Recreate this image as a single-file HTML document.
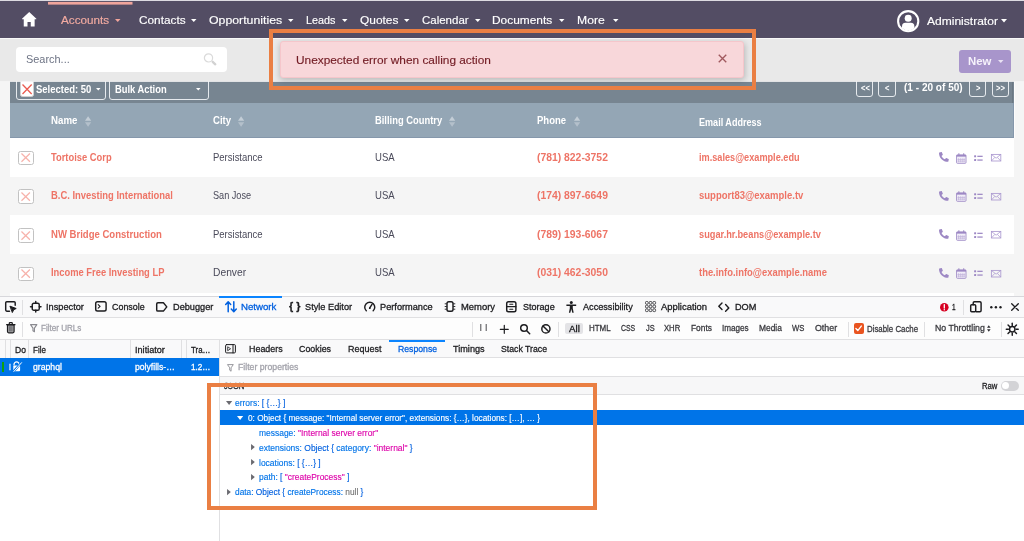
<!DOCTYPE html><html><head><meta charset="utf-8"><title>Accounts</title><style>
html,body{margin:0;padding:0;}body{width:1024px;height:541px;overflow:hidden;position:relative;background:#f5f5f5;font-family:"Liberation Sans", sans-serif;}
.t{position:absolute;white-space:pre;transform-origin:0 50%;}
svg{position:absolute;overflow:visible}
</style></head><body><div id="root" style="position:absolute;left:0;top:0;width:1024px;height:541px;will-change:transform;">
<div style="position:absolute;left:0px;top:0px;width:1024px;height:541px;background:#f5f5f5;"></div>
<div style="position:absolute;left:10px;top:81px;width:1003.5px;height:22px;background:#778591;"></div>
<div style="position:absolute;left:10px;top:102.8px;width:1003.5px;height:34.7px;background:#94a6b5;"></div>
<div style="position:absolute;left:10px;top:136.8px;width:1003.5px;height:1px;background:#8597ab;"></div>
<div style="position:absolute;left:1012.7px;top:102.8px;width:0.9px;height:34.7px;background:#8597ab;"></div>
<div style="position:absolute;left:1012.3px;top:81px;width:1.2px;height:21.8px;background:#6b7883;"></div>
<div style="position:absolute;left:1013.5px;top:81px;width:1.2px;height:57px;background:#fcfcfc;"></div>
<div style="position:absolute;left:10px;top:137.8px;width:1004.3px;height:38.8px;background:#ffffff;"></div>
<div style="position:absolute;left:10px;top:176.6px;width:1004.3px;height:38.8px;background:#f5f5f5;"></div>
<div style="position:absolute;left:10px;top:215.2px;width:1004.3px;height:38.8px;background:#ffffff;"></div>
<div style="position:absolute;left:10px;top:253.8px;width:1004.3px;height:38.8px;background:#f5f5f5;"></div>
<div style="position:absolute;left:10px;top:292.8px;width:1004.3px;height:10px;background:#ffffff;"></div>
<div style="position:absolute;left:15.5px;top:78px;width:90px;height:21.5px;box-sizing:border-box;border:1px solid #e6eaee;border-radius:3px;"></div>
<div style="position:absolute;left:109.3px;top:78px;width:100.2px;height:21.5px;box-sizing:border-box;border:1px solid #e6eaee;border-radius:3px;"></div>
<div style="position:absolute;left:856px;top:76px;width:17px;height:20.5px;box-sizing:border-box;border:1px solid #e6eaee;border-radius:3px;"></div>
<div style="position:absolute;left:878px;top:76px;width:17.5px;height:20.5px;box-sizing:border-box;border:1px solid #e6eaee;border-radius:3px;"></div>
<div style="position:absolute;left:969px;top:76px;width:16.5px;height:20.5px;box-sizing:border-box;border:1px solid #e6eaee;border-radius:3px;"></div>
<div style="position:absolute;left:991.8px;top:76px;width:17.2px;height:20.5px;box-sizing:border-box;border:1px solid #e6eaee;border-radius:3px;"></div>
<div style="position:absolute;left:20px;top:80px;width:13.500px;height:17px;background:#fff;border-radius:2.500px;box-sizing:border-box;border:1px solid #d0d0d0;"></div>
<svg style="left:21.700px;top:83.800px" width="10.200" height="10.600" viewBox="0 0 10 10" preserveAspectRatio="none"><path d="M0.5 0.5L9.5 9.5M9.5 0.5L0.5 9.5" stroke="#ea5b50" stroke-width="1.300" fill="none"/></svg>
<svg style="left:96.3px;top:87.5px" width="4.6" height="2.6" viewBox="0 0 4.6 2.6"><path d="M0 0H4.6L2.3 2.6Z" fill="#fff"/></svg>
<svg style="left:196.3px;top:87.5px" width="4.6" height="2.6" viewBox="0 0 4.6 2.6"><path d="M0 0H4.6L2.3 2.6Z" fill="#fff"/></svg>
<svg style="left:85px;top:115.7px" width="6.200" height="11" viewBox="0 0 6 10.4"><path d="M0 4.4H6L3 0Z" fill="#c3cdd6"/><path d="M0 6H6L3 10.4Z" fill="#b4c0cb"/></svg>
<svg style="left:238px;top:115.7px" width="6.200" height="11" viewBox="0 0 6 10.4"><path d="M0 4.4H6L3 0Z" fill="#c3cdd6"/><path d="M0 6H6L3 10.4Z" fill="#b4c0cb"/></svg>
<svg style="left:449px;top:115.7px" width="6.200" height="11" viewBox="0 0 6 10.4"><path d="M0 4.4H6L3 0Z" fill="#c3cdd6"/><path d="M0 6H6L3 10.4Z" fill="#b4c0cb"/></svg>
<svg style="left:573.8px;top:115.7px" width="6.200" height="11" viewBox="0 0 6 10.4"><path d="M0 4.4H6L3 0Z" fill="#c3cdd6"/><path d="M0 6H6L3 10.4Z" fill="#b4c0cb"/></svg>
<div style="position:absolute;left:18.300px;top:150.5px;width:15.300px;height:14.800px;box-sizing:border-box;border:1px solid #c2c2c2;border-radius:2.5px;background:#fff;"></div>
<svg style="left:21.2px;top:153.20000000000002px" width="9.4" height="9.2" viewBox="0 0 10 10" preserveAspectRatio="none"><path d="M0.500 0.500L9.500 9.500M9.500 0.500L0.500 9.500" stroke="#f7b2ab" stroke-width="1.3" fill="none"/></svg>
<svg style="left:939px;top:152.20000000000002px" width="9.800" height="9.800" viewBox="0 0 512 512"><path fill="#9d88c4" d="M493.4 24.6l-104-24c-11.3-2.6-22.9 3.300-27.500 13.900l-48 112c-4.200 9.800-1.400 21.300 6.900 28l60.600 49.600c-36 76.700-98.900 140.500-177.200 177.200l-49.600-60.600c-6.800-8.300-18.200-11.100-28-6.900l-112 48C3.900 366.500-2 378.100.6 389.400l24 104C27.100 504.200 36.700 512 48 512c256.100 0 464-207.500 464-464 0-11.200-7.700-20.900-18.600-23.400z" transform="translate(512 0) scale(-1 1)"/></svg>
<svg style="left:955.800px;top:152.50000000000003px" width="10.600" height="10.800" viewBox="0 0 11.2 11.6"><rect x="0.5" y="2" width="10.2" height="9.1" rx="1" fill="#f1edf8" stroke="#9d88c4" stroke-width="0.900"/><rect x="0.5" y="2" width="10.2" height="1.900" fill="#9d88c4"/><path d="M3 0.3V2.6M8.2 0.3V2.6" stroke="#9d88c4" stroke-width="1.1"/><path d="M2.6 5.6V10M4.6 5.6V10M6.600 5.6V10M8.6 5.6V10M1.5 7H9.7M1.5 8.800H9.7" stroke="#9d88c4" stroke-width="0.7" opacity="0.600"/></svg>
<svg style="left:973.500px;top:154.50000000000003px" width="8.800" height="6.400" viewBox="0 0 9.6 7.2"><rect x="0" y="0.400" width="2.2" height="2.2" rx="0.4" fill="#9d88c4"/><rect x="0" y="4.600" width="2.2" height="2.2" rx="0.4" fill="#9d88c4"/><rect x="3.6" y="0.800" width="6" height="1.4" fill="#9d88c4"/><rect x="3.6" y="5" width="6" height="1.4" fill="#9d88c4"/></svg>
<svg style="left:991.200px;top:154.3px" width="10.200" height="7.400" viewBox="0 0 10.8 7.8"><rect x="0.4" y="0.400" width="10" height="7" fill="none" stroke="#ab99d0" stroke-width="0.900"/><path d="M0.600 0.600L5.4 4.400L10.200 0.600M0.600 7.200L4.100 3.500M10.200 7.200L6.700 3.500" stroke="#ab99d0" stroke-width="0.800" fill="none"/></svg>
<div style="position:absolute;left:18.300px;top:189.22px;width:15.300px;height:14.800px;box-sizing:border-box;border:1px solid #c2c2c2;border-radius:2.5px;background:#fff;"></div>
<svg style="left:21.2px;top:191.92000000000002px" width="9.4" height="9.2" viewBox="0 0 10 10" preserveAspectRatio="none"><path d="M0.500 0.500L9.500 9.500M9.500 0.500L0.500 9.500" stroke="#f7b2ab" stroke-width="1.3" fill="none"/></svg>
<svg style="left:939px;top:190.70000000000002px" width="9.800" height="9.800" viewBox="0 0 512 512"><path fill="#9d88c4" d="M493.4 24.6l-104-24c-11.3-2.6-22.9 3.300-27.500 13.900l-48 112c-4.200 9.800-1.400 21.300 6.900 28l60.600 49.600c-36 76.700-98.900 140.500-177.200 177.200l-49.600-60.600c-6.800-8.300-18.200-11.100-28-6.900l-112 48C3.900 366.500-2 378.100.6 389.400l24 104C27.100 504.200 36.700 512 48 512c256.100 0 464-207.500 464-464 0-11.200-7.700-20.900-18.600-23.400z" transform="translate(512 0) scale(-1 1)"/></svg>
<svg style="left:955.800px;top:191.00000000000003px" width="10.600" height="10.800" viewBox="0 0 11.2 11.6"><rect x="0.5" y="2" width="10.2" height="9.1" rx="1" fill="#f1edf8" stroke="#9d88c4" stroke-width="0.900"/><rect x="0.5" y="2" width="10.2" height="1.900" fill="#9d88c4"/><path d="M3 0.3V2.6M8.2 0.3V2.6" stroke="#9d88c4" stroke-width="1.1"/><path d="M2.6 5.6V10M4.6 5.6V10M6.600 5.6V10M8.6 5.6V10M1.5 7H9.7M1.5 8.800H9.7" stroke="#9d88c4" stroke-width="0.7" opacity="0.600"/></svg>
<svg style="left:973.500px;top:193.00000000000003px" width="8.800" height="6.400" viewBox="0 0 9.6 7.2"><rect x="0" y="0.400" width="2.2" height="2.2" rx="0.4" fill="#9d88c4"/><rect x="0" y="4.600" width="2.2" height="2.2" rx="0.4" fill="#9d88c4"/><rect x="3.6" y="0.800" width="6" height="1.4" fill="#9d88c4"/><rect x="3.6" y="5" width="6" height="1.4" fill="#9d88c4"/></svg>
<svg style="left:991.200px;top:192.8px" width="10.200" height="7.400" viewBox="0 0 10.8 7.8"><rect x="0.4" y="0.400" width="10" height="7" fill="none" stroke="#ab99d0" stroke-width="0.900"/><path d="M0.600 0.600L5.4 4.400L10.200 0.600M0.600 7.200L4.100 3.500M10.200 7.200L6.700 3.500" stroke="#ab99d0" stroke-width="0.800" fill="none"/></svg>
<div style="position:absolute;left:18.300px;top:227.94px;width:15.300px;height:14.800px;box-sizing:border-box;border:1px solid #c2c2c2;border-radius:2.5px;background:#fff;"></div>
<svg style="left:21.2px;top:230.64000000000001px" width="9.4" height="9.2" viewBox="0 0 10 10" preserveAspectRatio="none"><path d="M0.500 0.500L9.500 9.500M9.500 0.500L0.500 9.500" stroke="#f7b2ab" stroke-width="1.3" fill="none"/></svg>
<svg style="left:939px;top:229.20000000000002px" width="9.800" height="9.800" viewBox="0 0 512 512"><path fill="#9d88c4" d="M493.4 24.6l-104-24c-11.3-2.6-22.9 3.300-27.500 13.900l-48 112c-4.200 9.800-1.400 21.300 6.900 28l60.600 49.600c-36 76.700-98.900 140.500-177.200 177.200l-49.600-60.600c-6.800-8.300-18.200-11.100-28-6.900l-112 48C3.900 366.500-2 378.100.6 389.400l24 104C27.100 504.200 36.700 512 48 512c256.100 0 464-207.500 464-464 0-11.200-7.700-20.900-18.600-23.400z" transform="translate(512 0) scale(-1 1)"/></svg>
<svg style="left:955.800px;top:229.50000000000003px" width="10.600" height="10.800" viewBox="0 0 11.2 11.6"><rect x="0.5" y="2" width="10.2" height="9.1" rx="1" fill="#f1edf8" stroke="#9d88c4" stroke-width="0.900"/><rect x="0.5" y="2" width="10.2" height="1.900" fill="#9d88c4"/><path d="M3 0.3V2.6M8.2 0.3V2.6" stroke="#9d88c4" stroke-width="1.1"/><path d="M2.6 5.6V10M4.6 5.6V10M6.600 5.6V10M8.6 5.6V10M1.5 7H9.7M1.5 8.800H9.7" stroke="#9d88c4" stroke-width="0.7" opacity="0.600"/></svg>
<svg style="left:973.500px;top:231.50000000000003px" width="8.800" height="6.400" viewBox="0 0 9.6 7.2"><rect x="0" y="0.400" width="2.2" height="2.2" rx="0.4" fill="#9d88c4"/><rect x="0" y="4.600" width="2.2" height="2.2" rx="0.4" fill="#9d88c4"/><rect x="3.6" y="0.800" width="6" height="1.4" fill="#9d88c4"/><rect x="3.6" y="5" width="6" height="1.4" fill="#9d88c4"/></svg>
<svg style="left:991.200px;top:231.3px" width="10.200" height="7.400" viewBox="0 0 10.8 7.8"><rect x="0.4" y="0.400" width="10" height="7" fill="none" stroke="#ab99d0" stroke-width="0.900"/><path d="M0.600 0.600L5.4 4.400L10.200 0.600M0.600 7.200L4.100 3.500M10.200 7.200L6.700 3.500" stroke="#ab99d0" stroke-width="0.800" fill="none"/></svg>
<div style="position:absolute;left:18.300px;top:266.66px;width:15.300px;height:14.800px;box-sizing:border-box;border:1px solid #c2c2c2;border-radius:2.5px;background:#fff;"></div>
<svg style="left:21.2px;top:269.36px" width="9.4" height="9.2" viewBox="0 0 10 10" preserveAspectRatio="none"><path d="M0.500 0.500L9.500 9.500M9.500 0.500L0.500 9.500" stroke="#f7b2ab" stroke-width="1.3" fill="none"/></svg>
<svg style="left:939px;top:267.7px" width="9.800" height="9.800" viewBox="0 0 512 512"><path fill="#9d88c4" d="M493.4 24.6l-104-24c-11.3-2.6-22.9 3.300-27.500 13.900l-48 112c-4.200 9.800-1.400 21.300 6.900 28l60.600 49.600c-36 76.700-98.900 140.500-177.200 177.200l-49.600-60.600c-6.800-8.300-18.200-11.100-28-6.900l-112 48C3.900 366.500-2 378.100.6 389.400l24 104C27.100 504.200 36.700 512 48 512c256.100 0 464-207.500 464-464 0-11.200-7.700-20.900-18.600-23.400z" transform="translate(512 0) scale(-1 1)"/></svg>
<svg style="left:955.800px;top:268.0px" width="10.600" height="10.800" viewBox="0 0 11.2 11.6"><rect x="0.5" y="2" width="10.2" height="9.1" rx="1" fill="#f1edf8" stroke="#9d88c4" stroke-width="0.900"/><rect x="0.5" y="2" width="10.2" height="1.900" fill="#9d88c4"/><path d="M3 0.3V2.6M8.2 0.3V2.6" stroke="#9d88c4" stroke-width="1.1"/><path d="M2.6 5.6V10M4.6 5.6V10M6.600 5.6V10M8.6 5.6V10M1.5 7H9.7M1.5 8.800H9.7" stroke="#9d88c4" stroke-width="0.7" opacity="0.600"/></svg>
<svg style="left:973.500px;top:270.0px" width="8.800" height="6.400" viewBox="0 0 9.6 7.2"><rect x="0" y="0.400" width="2.2" height="2.2" rx="0.4" fill="#9d88c4"/><rect x="0" y="4.600" width="2.2" height="2.2" rx="0.4" fill="#9d88c4"/><rect x="3.6" y="0.800" width="6" height="1.4" fill="#9d88c4"/><rect x="3.6" y="5" width="6" height="1.4" fill="#9d88c4"/></svg>
<svg style="left:991.200px;top:269.8px" width="10.200" height="7.400" viewBox="0 0 10.8 7.8"><rect x="0.4" y="0.400" width="10" height="7" fill="none" stroke="#ab99d0" stroke-width="0.900"/><path d="M0.600 0.600L5.4 4.400L10.200 0.600M0.600 7.200L4.100 3.500M10.200 7.200L6.700 3.500" stroke="#ab99d0" stroke-width="0.800" fill="none"/></svg>
<div style="position:absolute;left:0px;top:38px;width:1024px;height:43px;background:#e9e9e9;"></div>
<div style="position:absolute;left:0px;top:81px;width:1024px;height:1px;background:#f3f3f3;opacity:.85;"></div>
<div style="position:absolute;left:0px;top:38px;width:1024px;height:1px;background:#f8f8f8;"></div>
<div style="position:absolute;left:16.200px;top:46.600px;width:210.8px;height:25px;background:#fff;border-radius:4px;"></div>
<svg style="left:203px;top:53px" width="14" height="13" viewBox="0 0 14 13"><circle cx="5.500" cy="4.900" r="4.100" fill="none" stroke="#dadada" stroke-width="1.200"/><path d="M9.700 8.800L12.300 11.300" stroke="#d2d2d2" stroke-width="2.300" stroke-linecap="round"/></svg>
<div style="position:absolute;left:958.5px;top:50px;width:52.5px;height:22.8px;background:#a895cb;border-radius:3px;"></div>
<svg style="left:997.5px;top:59.5px" width="5.5" height="3" viewBox="0 0 5.5 3"><path d="M0 0H5.5L2.75 3Z" fill="#e9e2f3"/></svg>
<div style="position:absolute;left:0px;top:0px;width:1024px;height:38px;background:#534d64;"></div>
<div style="position:absolute;left:0px;top:0px;width:1024px;height:1px;background:#dddbe1;"></div>
<svg style="left:48px;top:0px" width="84.500" height="6" viewBox="0 0 84.500 6"><rect x="0" y="1.900" width="84.500" height="2.700" fill="#f0a59c"/></svg>
<svg style="left:22.200px;top:11.900px" width="14.400" height="14.600" viewBox="0 0 14.400 14.600"><path d="M7.200 0L0 6.800Q0 7.300 0.500 7.300H1.750V14.600H5.500V10H8.750V14.600H12.650V7.300H13.900Q14.400 7.300 14.400 6.800Z" fill="#fff"/></svg>
<svg style="left:115px;top:19.3px" width="5.5" height="3" viewBox="0 0 5.5 3"><path d="M0 0H5.5L2.75 3Z" fill="#f3a59b"/></svg>
<svg style="left:191.2px;top:19.3px" width="5.5" height="3" viewBox="0 0 5.5 3"><path d="M0 0H5.5L2.75 3Z" fill="#fff"/></svg>
<svg style="left:288px;top:19.3px" width="5.5" height="3" viewBox="0 0 5.5 3"><path d="M0 0H5.5L2.75 3Z" fill="#fff"/></svg>
<svg style="left:341.5px;top:19.3px" width="5.5" height="3" viewBox="0 0 5.5 3"><path d="M0 0H5.5L2.75 3Z" fill="#fff"/></svg>
<svg style="left:404px;top:19.3px" width="5.5" height="3" viewBox="0 0 5.5 3"><path d="M0 0H5.5L2.75 3Z" fill="#fff"/></svg>
<svg style="left:474.8px;top:19.3px" width="5.5" height="3" viewBox="0 0 5.5 3"><path d="M0 0H5.5L2.75 3Z" fill="#fff"/></svg>
<svg style="left:558.8px;top:19.3px" width="5.5" height="3" viewBox="0 0 5.5 3"><path d="M0 0H5.5L2.75 3Z" fill="#fff"/></svg>
<svg style="left:613.2px;top:19.3px" width="5.5" height="3" viewBox="0 0 5.5 3"><path d="M0 0H5.5L2.75 3Z" fill="#fff"/></svg>
<svg style="left:896.8px;top:9.700px" width="22.4" height="22.4" viewBox="0 0 22.400 22.400"><defs><clipPath id="uc"><circle cx="11.200" cy="11.200" r="9.2"/></clipPath></defs><circle cx="11.200" cy="11.200" r="10.1" fill="none" stroke="#fff" stroke-width="2.100"/><g clip-path="url(#uc)" fill="#fff"><circle cx="11.200" cy="8.300" r="3.5"/><path d="M5 22V16.500Q5 12.800 8.500 12.800H13.900Q17.400 12.800 17.400 16.500V22Z"/></g></svg>
<svg style="left:1001px;top:19.4px" width="6" height="3.4" viewBox="0 0 6 3.4"><path d="M0 0H6L3.0 3.4Z" fill="#fff"/></svg>
<div style="position:absolute;left:280px;top:40.700px;width:464px;height:37.200px;box-sizing:border-box;background:#f8d7da;border:1px solid #f5c6cb;border-radius:3px;box-shadow:0.500px 2px 6px rgba(0,0,0,.22);"></div>
<svg style="left:718.3px;top:54px" width="9" height="9" viewBox="0 0 8.500 8.500"><path d="M0.700 0.700L7.800 7.800M7.800 0.700L0.700 7.800" stroke="#a0595e" stroke-width="1.300"/></svg>
<div style="position:absolute;left:269px;top:28.500px;width:487px;height:61.500px;box-sizing:border-box;border:4px solid #ea7f43;z-index:5"></div>
<div style="position:absolute;left:0px;top:296px;width:1024px;height:245px;background:#ffffff;"></div>
<div style="position:absolute;left:0px;top:295.5px;width:1024px;height:1px;background:#d7d7db;"></div>
<div style="position:absolute;left:0px;top:296.5px;width:1024px;height:20.5px;background:#f9f9fa;"></div>
<div style="position:absolute;left:0px;top:317px;width:1024px;height:1px;background:#e0e0e2;"></div>
<div style="position:absolute;left:218.8px;top:296px;width:63.2px;height:1.5px;background:#0a84ff;"></div>
<div style="position:absolute;left:0px;top:318px;width:1024px;height:21px;background:#fdfdfd;"></div>
<div style="position:absolute;left:0px;top:339px;width:1024px;height:1px;background:#e0e0e2;"></div>
<div style="position:absolute;left:0px;top:340px;width:219px;height:17.5px;background:#f9f9fa;"></div>
<div style="position:absolute;left:0px;top:357.5px;width:219px;height:0.8px;background:#e0e0e2;"></div>
<div style="position:absolute;left:5px;top:340px;width:0.8px;height:17.5px;background:#e0e0e2;"></div>
<div style="position:absolute;left:10.4px;top:340px;width:0.8px;height:17.5px;background:#e0e0e2;"></div>
<div style="position:absolute;left:28px;top:340px;width:0.8px;height:17.5px;background:#e0e0e2;"></div>
<div style="position:absolute;left:130px;top:340px;width:0.8px;height:17.5px;background:#e0e0e2;"></div>
<div style="position:absolute;left:181.2px;top:340px;width:0.8px;height:17.5px;background:#e0e0e2;"></div>
<div style="position:absolute;left:186px;top:340px;width:0.8px;height:17.5px;background:#e0e0e2;"></div>
<div style="position:absolute;left:0px;top:358px;width:219px;height:17.8px;background:#0074e8;"></div>
<div style="position:absolute;left:2px;top:362.2px;width:2px;height:9.6px;background:#10a010;"></div>
<div style="position:absolute;left:219px;top:340px;width:1px;height:201px;background:#e0e0e2;"></div>
<div style="position:absolute;left:220px;top:340px;width:804px;height:17px;background:#f9f9fa;"></div>
<div style="position:absolute;left:220px;top:357px;width:804px;height:0.8px;background:#e0e0e2;"></div>
<div style="position:absolute;left:388.8px;top:340px;width:56.4px;height:1.5px;background:#0a84ff;"></div>
<div style="position:absolute;left:220px;top:357.8px;width:804px;height:18.2px;background:#ffffff;"></div>
<div style="position:absolute;left:220px;top:376px;width:804px;height:0.8px;background:#e0e0e2;"></div>
<div style="position:absolute;left:220px;top:376.8px;width:804px;height:17.5px;background:#f7f7f8;"></div>
<div style="position:absolute;left:220px;top:394.3px;width:804px;height:0.8px;background:#e0e0e2;"></div>
<div style="position:absolute;left:220px;top:410.2px;width:804px;height:14.5px;background:#0074e8;"></div>
<svg style="left:5px;top:301px" width="11.5" height="11.5" viewBox="0 0 11.5 11.5" fill="none" stroke="#1c1c1f" stroke-width="1.450" stroke-linecap="round" stroke-linejoin="round"><path d="M4.500 10.200H1.800Q0.700 10.200 0.700 9.100V1.800Q0.700 0.700 1.800 0.700H9.100Q10.200 0.700 10.200 1.800V4.200"/><path d="M5.300 5.300L11.200 7.500L8.700 8.700L7.500 11.200Z" fill="#1c1c1f" stroke-width="1"/></svg>
<div style="position:absolute;left:22px;top:299.5px;width:1px;height:15.5px;background:#e0e0e2;"></div>
<svg style="left:29.5px;top:301px" width="11.5" height="11.5" viewBox="0 0 11.5 11.5" fill="none" stroke="#1c1c1f" stroke-width="1.450" stroke-linecap="round" stroke-linejoin="round"><rect x="2.250" y="2.250" width="7" height="7" rx="1.600"/><path d="M5.750 0.500V2.200M5.750 9.300V11M0.500 5.750H2.200M9.300 5.750H11"/></svg>
<svg style="left:95.3px;top:301.3px" width="11.8" height="10.8" viewBox="0 0 11.8 10.8" fill="none" stroke="#1c1c1f" stroke-width="1.450" stroke-linecap="round" stroke-linejoin="round"><rect x="0.700" y="0.700" width="10.400" height="9.400" rx="1.800"/><path d="M3.200 3.600L5.100 5.400L3.200 7.200" stroke-width="1.100"/></svg>
<svg style="left:156px;top:301.8px" width="11.5" height="9.8" viewBox="0 0 11.5 9.8" fill="none" stroke="#1c1c1f" stroke-width="1.450" stroke-linecap="round" stroke-linejoin="round"><path d="M1.900 0.700H7.400L10.800 4.900L7.400 9.100H1.900Q0.700 9.100 0.700 7.900V1.900Q0.700 0.700 1.900 0.700Z"/></svg>
<svg style="left:224.5px;top:300.5px" width="12" height="11.5" viewBox="0 0 12 11.5" fill="none" stroke="#0060df" stroke-width="1.500" stroke-linecap="round" stroke-linejoin="round"><path d="M3.200 10.800V1M0.700 3.500L3.200 0.800L5.700 3.500M8.800 0.700V10.500M6.300 8L8.800 10.700L11.300 8"/></svg>
<svg style="left:363.8px;top:300.8px" width="11.5" height="11" viewBox="0 0 11.5 11" fill="none" stroke="#1c1c1f" stroke-width="1.450" stroke-linecap="round" stroke-linejoin="round"><path d="M2.300 9.800A5 5 0 1 1 9.200 9.800"/><path d="M5.750 6.800L8 3.400"/><circle cx="5.750" cy="7.200" r="0.900" fill="#1c1c1f" stroke="none"/></svg>
<svg style="left:443.8px;top:301px" width="12" height="11" viewBox="0 0 12 11" fill="none" stroke="#1c1c1f" stroke-width="1.450" stroke-linecap="round" stroke-linejoin="round"><rect x="3" y="0.700" width="6" height="9.600" rx="1.800"/><path d="M1.100 2.800H2.400M1.100 5.500H2.400M1.100 8.200H2.400M9.600 2.800H10.900M9.600 5.500H10.900M9.600 8.200H10.900" stroke-width="0.900"/></svg>
<svg style="left:506.2px;top:300.8px" width="10.6" height="11.4" viewBox="0 0 10.6 11.4" fill="none" stroke="#1c1c1f" stroke-width="1.450" stroke-linecap="round" stroke-linejoin="round"><rect x="0.700" y="0.700" width="9.200" height="10" rx="1.800"/><path d="M0.700 5.700H9.900" stroke-width="1.200"/><path d="M3.800 3.300H6.800M3.800 8.300H6.800" stroke-width="1.100"/></svg>
<svg style="left:566.2px;top:300.500px" width="10.600" height="12" viewBox="0 0 10.600 12" fill="#1c1c1f"><circle cx="5.300" cy="1.500" r="1.500"/><path d="M0.400 3.600H10.200V5H6.800V7.200L7.700 11.800H6.300L5.300 8L4.300 11.800H2.900L3.800 7.200V5H0.400Z"/></svg>
<svg style="left:644.5px;top:301px" width="11" height="11" viewBox="0 0 11 11" fill="none" stroke="#2a2a2e" stroke-width="0.800"><rect x="0.5" y="0.5" width="2.700" height="2.700" rx="0.900"/><rect x="0.5" y="4.2" width="2.700" height="2.700" rx="0.900"/><rect x="0.5" y="7.9" width="2.700" height="2.700" rx="0.900"/><rect x="4.2" y="0.5" width="2.700" height="2.700" rx="0.900"/><rect x="4.2" y="4.2" width="2.700" height="2.700" rx="0.900"/><rect x="4.2" y="7.9" width="2.700" height="2.700" rx="0.900"/><rect x="7.9" y="0.5" width="2.700" height="2.700" rx="0.900"/><rect x="7.9" y="4.2" width="2.700" height="2.700" rx="0.900"/><rect x="7.9" y="7.9" width="2.700" height="2.700" rx="0.900"/></svg>
<svg style="left:718.2px;top:301.5px" width="11.8" height="10" viewBox="0 0 11.8 10" fill="none" stroke="#1c1c1f" stroke-width="1.450" stroke-linecap="round" stroke-linejoin="round"><path d="M4 1L0.800 4.300L4 7.600M7.600 2.600L10.800 5.900L7.600 9.200" stroke-width="1.400"/></svg>
<svg style="left:940px;top:303.100px" width="8.600" height="8.600" viewBox="0 0 8.600 8.600"><circle cx="4.300" cy="4.300" r="4.300" fill="#d70022"/><path d="M4.300 1.700V5" stroke="#fff" stroke-width="1.300" stroke-linecap="round"/><circle cx="4.300" cy="6.700" r="0.750" fill="#fff"/></svg>
<div style="position:absolute;left:962.5px;top:299.5px;width:0.8px;height:15.5px;background:#e0e0e2;"></div>
<svg style="left:970px;top:301.4px" width="11.8" height="11.4" viewBox="0 0 11.8 11.4" fill="none" stroke="#1c1c1f" stroke-width="1.450" stroke-linecap="round" stroke-linejoin="round"><path d="M3.200 3.800V1.900Q3.200 0.700 4.400 0.700H9.900Q11.100 0.700 11.100 1.900V9.500Q11.100 10.700 9.900 10.700H6.200"/><rect x="0.700" y="3.800" width="5" height="6.900" rx="1"/></svg>
<svg style="left:990px;top:306.100px" width="11.800" height="2.600" viewBox="0 0 11.800 2.600" fill="#1c1c1f"><circle cx="1.300" cy="1.300" r="1.200"/><circle cx="5.900" cy="1.300" r="1.200"/><circle cx="10.500" cy="1.300" r="1.200"/></svg>
<svg style="left:1011.2px;top:302.6px" width="8" height="8" viewBox="0 0 8 8" fill="none" stroke="#1c1c1f" stroke-width="1.450" stroke-linecap="round" stroke-linejoin="round"><path d="M0.700 0.700L7.300 7.300M7.300 0.700L0.700 7.300" stroke-width="1.300"/></svg>
<svg style="left:6.2px;top:322.2px" width="9.6" height="11.4" viewBox="0 0 9.6 11.4" fill="none" stroke="#1c1c1f" stroke-width="1.450" stroke-linecap="round" stroke-linejoin="round"><path d="M0.600 2.700H9M3.300 2.500V1.300Q3.300 0.600 4 0.600H5.600Q6.300 0.600 6.300 1.300V2.500" stroke-width="1.200"/><path d="M1.500 2.900V9.600Q1.500 10.800 2.700 10.800H6.900Q8.100 10.800 8.100 9.600V2.900Z" fill="#3a3a3e" fill-opacity="0.45" stroke-width="1.200"/><path d="M3.600 4.600V9M4.800 4.600V9M6 4.600V9" stroke-width="0.600" stroke="#4a4a4f"/></svg>
<div style="position:absolute;left:22px;top:321.5px;width:1px;height:15.5px;background:#e0e0e2;"></div>
<svg style="left:30.400px;top:324.400px" width="7.400" height="8.600" viewBox="0 0 7 8" fill="none" stroke="#8a8a90" stroke-width="1.050" stroke-linejoin="round"><path d="M0.500 0.500H6.500L4.200 3.800V7.300L2.800 6.300V3.800Z"/></svg>
<div style="position:absolute;left:472px;top:321.5px;width:0.8px;height:15.5px;background:#e0e0e2;"></div>
<svg style="left:479.700px;top:323.700px" width="7" height="7" viewBox="0 0 7 7" stroke="#4a4a4f" stroke-width="1"><path d="M0.800 0V7M6.200 0V7"/></svg>
<svg style="left:499.5px;top:324.8px" width="8.6" height="8.6" viewBox="0 0 8.6 8.6" fill="none" stroke="#1c1c1f" stroke-width="1.450" stroke-linecap="round" stroke-linejoin="round"><path d="M4.300 0.300V8.300M0.300 4.300H8.300" stroke-width="1.200"/></svg>
<svg style="left:519.5px;top:324px" width="10.4" height="10.4" viewBox="0 0 10.4 10.4" fill="none" stroke="#1c1c1f" stroke-width="1.450" stroke-linecap="round" stroke-linejoin="round"><circle cx="4" cy="4" r="3.300"/><path d="M6.500 6.500L9.700 9.700" stroke-width="1.500"/></svg>
<svg style="left:540.8px;top:324.2px" width="9.8" height="9.8" viewBox="0 0 9.8 9.8" fill="none" stroke="#1c1c1f" stroke-width="1.450" stroke-linecap="round" stroke-linejoin="round"><circle cx="4.900" cy="4.900" r="4.100"/><path d="M2 2L7.800 7.800"/></svg>
<div style="position:absolute;left:557.5px;top:321.5px;width:0.8px;height:15.5px;background:#e0e0e2;"></div>
<div style="position:absolute;left:565px;top:323px;width:18px;height:11px;background:#e3e3e6;border-radius:2px;"></div>
<div style="position:absolute;left:848px;top:321.5px;width:0.8px;height:15.5px;background:#e0e0e2;"></div>
<div style="position:absolute;left:853.800px;top:323px;width:10px;height:10.800px;background:#e95420;border-radius:2px;"></div>
<svg style="left:855.300px;top:324.800px" width="7.200" height="7" viewBox="0 0 7.200 7" fill="none" stroke="#fff" stroke-width="1.400" stroke-linecap="round" stroke-linejoin="round"><path d="M0.900 3.600L2.800 5.600L6.300 1.100"/></svg>
<div style="position:absolute;left:924.2px;top:321.5px;width:0.8px;height:15.5px;background:#e0e0e2;"></div>
<svg style="left:987.300px;top:325.200px" width="3.600" height="7" viewBox="0 0 3.600 7" fill="#2a2a2e"><path d="M0 2.800H3.600L1.800 0.300Z"/><path d="M0 4.200H3.600L1.800 6.700Z"/></svg>
<div style="position:absolute;left:1000.5px;top:321.5px;width:0.8px;height:15.5px;background:#e0e0e2;"></div>
<svg style="left:1005.5px;top:322.8px" width="12.5" height="12.5" viewBox="0 0 12.5 12.5" fill="none" stroke="#1c1c1f" stroke-width="1.450" stroke-linecap="round" stroke-linejoin="round"><circle cx="6.250" cy="6.250" r="2.700"/><path d="M6.250 0.300V2.400" transform="rotate(0 6.250 6.250)"/><path d="M6.250 0.300V2.400" transform="rotate(45 6.250 6.250)"/><path d="M6.250 0.300V2.400" transform="rotate(90 6.250 6.250)"/><path d="M6.250 0.300V2.400" transform="rotate(135 6.250 6.250)"/><path d="M6.250 0.300V2.400" transform="rotate(180 6.250 6.250)"/><path d="M6.250 0.300V2.400" transform="rotate(225 6.250 6.250)"/><path d="M6.250 0.300V2.400" transform="rotate(270 6.250 6.250)"/><path d="M6.250 0.300V2.400" transform="rotate(315 6.250 6.250)"/></svg>
<svg style="left:13px;top:361px" width="9.500" height="11.500" viewBox="0 0 9.500 11.500"><path d="M1 4.500V3.400A2.600 2.600 0 0 1 6.200 3.400V4.500" fill="none" stroke="#fff" stroke-width="1.200"/><rect x="0.300" y="4.500" width="6.800" height="5.800" rx="1" fill="#fff"/><path d="M0.300 10.800L9 1" stroke="#0074e8" stroke-width="2.200"/><path d="M0.600 10.800L8.800 1.400" stroke="#fff" stroke-width="1"/></svg>
<svg style="left:225px;top:344px" width="11" height="9.5" viewBox="0 0 11 9.5" fill="none" stroke="#1c1c1f" stroke-width="1.450" stroke-linecap="round" stroke-linejoin="round"><rect x="0.600" y="0.600" width="9.800" height="8.300" rx="1" stroke-width="1"/><path d="M8 0.600V8.900" stroke-width="1"/><path d="M3 3L5.600 4.750L3 6.500Z" stroke-width="0.800"/></svg>
<svg style="left:227px;top:363.500px" width="6.800" height="8" viewBox="0 0 7 8" fill="none" stroke="#8a8a90" stroke-width="0.900" stroke-linejoin="round"><path d="M0.500 0.500H6.500L4.200 3.800V7.300L2.800 6.300V3.800Z"/></svg>
<div style="position:absolute;left:1000.500px;top:380.800px;width:18.800px;height:9.800px;background:#d3d3d6;border-radius:5px;"></div>
<div style="position:absolute;left:1002px;top:382.200px;width:7px;height:7px;background:#fff;border-radius:4px;"></div>
<svg style="left:225.8px;top:400.8px" width="6.200" height="4" viewBox="0 0 5.600 3.600"><path d="M0 0H5.600L2.800 3.600Z" fill="#6a6a70"/></svg>
<svg style="left:236.8px;top:415.8px" width="6.200" height="4" viewBox="0 0 5.600 3.600"><path d="M0 0H5.600L2.800 3.600Z" fill="#fff"/></svg>
<svg style="left:250.8px;top:444.4px" width="3.900" height="6.200" viewBox="0 0 3.400 5.600"><path d="M0 0V5.600L3.400 2.800Z" fill="#6a6a70"/></svg>
<svg style="left:250.8px;top:459.4px" width="3.900" height="6.200" viewBox="0 0 3.400 5.600"><path d="M0 0V5.600L3.400 2.800Z" fill="#6a6a70"/></svg>
<svg style="left:250.8px;top:474.09999999999997px" width="3.900" height="6.200" viewBox="0 0 3.400 5.600"><path d="M0 0V5.600L3.400 2.800Z" fill="#6a6a70"/></svg>
<svg style="left:227px;top:488.9px" width="3.900" height="6.200" viewBox="0 0 3.400 5.600"><path d="M0 0V5.600L3.400 2.800Z" fill="#6a6a70"/></svg>
<div style="position:absolute;left:206.900px;top:382.700px;width:390.600px;height:127px;box-sizing:border-box;border:4.300px solid #ea7f43;z-index:5"></div>
<span class="t" style="left:35.5px;top:82.79px;font-size:10.3px;line-height:14.42px;color:#fff;font-weight:700;transform:scaleX(0.9217);">Selected: 50</span>
<span class="t" style="left:115px;top:82.79px;font-size:10.3px;line-height:14.42px;color:#fff;font-weight:700;transform:scaleX(0.9080);">Bulk Action</span>
<span class="t" style="left:860.5px;top:82.28px;font-size:8.6px;line-height:12.04px;color:#fff;font-weight:700;transform:scaleX(0.8858);">&lt;&lt;</span>
<span class="t" style="left:884.5px;top:82.28px;font-size:8.6px;line-height:12.04px;color:#fff;font-weight:700;transform:scaleX(0.8745);">&lt;</span>
<span class="t" style="left:903.5px;top:80.48px;font-size:10.6px;line-height:14.84px;color:#fff;font-weight:700;transform:scaleX(0.9494);">(1 - 20 of 50)</span>
<span class="t" style="left:975.5px;top:82.28px;font-size:8.6px;line-height:12.04px;color:#fff;font-weight:700;transform:scaleX(0.8745);">&gt;</span>
<span class="t" style="left:996px;top:82.28px;font-size:8.6px;line-height:12.04px;color:#fff;font-weight:700;transform:scaleX(0.8858);">&gt;&gt;</span>
<span class="t" style="left:51px;top:113.41px;font-size:10.7px;line-height:14.98px;color:#fff;font-weight:700;transform:scaleX(0.9069);">Name</span>
<span class="t" style="left:212.8px;top:113.41px;font-size:10.7px;line-height:14.98px;color:#fff;font-weight:700;transform:scaleX(0.8959);">City</span>
<span class="t" style="left:374.8px;top:113.41px;font-size:10.7px;line-height:14.98px;color:#fff;font-weight:700;transform:scaleX(0.8761);">Billing Country</span>
<span class="t" style="left:536.5px;top:113.41px;font-size:10.7px;line-height:14.98px;color:#fff;font-weight:700;transform:scaleX(0.8907);">Phone</span>
<span class="t" style="left:699px;top:114.51px;font-size:10.7px;line-height:14.98px;color:#fff;font-weight:700;transform:scaleX(0.8476);">Email Address</span>
<span class="t" style="left:51px;top:149.97px;font-size:10.9px;line-height:15.26px;color:#ee7466;font-weight:700;transform:scaleX(0.8584);">Tortoise Corp</span>
<span class="t" style="left:212.8px;top:149.97px;font-size:10.9px;line-height:15.26px;color:#4a4a5a;font-weight:400;transform:scaleX(0.8716);">Persistance</span>
<span class="t" style="left:374.8px;top:149.97px;font-size:10.9px;line-height:15.26px;color:#4a4a5a;font-weight:400;transform:scaleX(0.8748);">USA</span>
<span class="t" style="left:536.5px;top:149.97px;font-size:10.9px;line-height:15.26px;color:#ee7466;font-weight:700;transform:scaleX(0.9519);">(781) 822-3752</span>
<span class="t" style="left:699px;top:149.97px;font-size:10.9px;line-height:15.26px;color:#ee7466;font-weight:700;transform:scaleX(0.8412);">im.sales@example.edu</span>
<span class="t" style="left:51px;top:188.47px;font-size:10.9px;line-height:15.26px;color:#ee7466;font-weight:700;transform:scaleX(0.8645);">B.C. Investing International</span>
<span class="t" style="left:212.8px;top:188.47px;font-size:10.9px;line-height:15.26px;color:#4a4a5a;font-weight:400;transform:scaleX(0.8388);">San Jose</span>
<span class="t" style="left:374.8px;top:188.47px;font-size:10.9px;line-height:15.26px;color:#4a4a5a;font-weight:400;transform:scaleX(0.8748);">USA</span>
<span class="t" style="left:536.5px;top:188.47px;font-size:10.9px;line-height:15.26px;color:#ee7466;font-weight:700;transform:scaleX(0.9519);">(174) 897-6649</span>
<span class="t" style="left:699px;top:188.47px;font-size:10.9px;line-height:15.26px;color:#ee7466;font-weight:700;transform:scaleX(0.8731);">support83@example.tv</span>
<span class="t" style="left:51px;top:226.97px;font-size:10.9px;line-height:15.26px;color:#ee7466;font-weight:700;transform:scaleX(0.8770);">NW Bridge Construction</span>
<span class="t" style="left:212.8px;top:226.97px;font-size:10.9px;line-height:15.26px;color:#4a4a5a;font-weight:400;transform:scaleX(0.8716);">Persistance</span>
<span class="t" style="left:374.8px;top:226.97px;font-size:10.9px;line-height:15.26px;color:#4a4a5a;font-weight:400;transform:scaleX(0.8748);">USA</span>
<span class="t" style="left:536.5px;top:226.97px;font-size:10.9px;line-height:15.26px;color:#ee7466;font-weight:700;transform:scaleX(0.9519);">(789) 193-6067</span>
<span class="t" style="left:699px;top:226.97px;font-size:10.9px;line-height:15.26px;color:#ee7466;font-weight:700;transform:scaleX(0.8477);">sugar.hr.beans@example.tv</span>
<span class="t" style="left:51px;top:265.47px;font-size:10.9px;line-height:15.26px;color:#ee7466;font-weight:700;transform:scaleX(0.8595);">Income Free Investing LP</span>
<span class="t" style="left:212.8px;top:265.47px;font-size:10.9px;line-height:15.26px;color:#4a4a5a;font-weight:400;transform:scaleX(0.9428);">Denver</span>
<span class="t" style="left:374.8px;top:265.47px;font-size:10.9px;line-height:15.26px;color:#4a4a5a;font-weight:400;transform:scaleX(0.8748);">USA</span>
<span class="t" style="left:536.5px;top:265.47px;font-size:10.9px;line-height:15.26px;color:#ee7466;font-weight:700;transform:scaleX(0.9519);">(031) 462-3050</span>
<span class="t" style="left:699px;top:265.47px;font-size:10.9px;line-height:15.26px;color:#ee7466;font-weight:700;transform:scaleX(0.8642);">the.info.info@example.name</span>
<span class="t" style="left:25.5px;top:51.82px;font-size:11.4px;line-height:15.96px;color:#6d7384;font-weight:400;transform:scaleX(0.9585);">Search...</span>
<span class="t" style="left:967.5px;top:53.92px;font-size:11.4px;line-height:15.96px;color:#f6f2fb;font-weight:700;transform:scaleX(0.9991);">New</span>
<span class="t" style="left:60.5px;top:11.55px;font-size:11.5px;line-height:16.1px;color:#f3aba1;font-weight:400;transform:scaleX(1.0166);-webkit-text-stroke:0.15px currentColor;">Accounts</span>
<span class="t" style="left:138.8px;top:11.55px;font-size:11.5px;line-height:16.1px;color:#fff;font-weight:400;transform:scaleX(1.0266);-webkit-text-stroke:0.15px currentColor;">Contacts</span>
<span class="t" style="left:209px;top:11.55px;font-size:11.5px;line-height:16.1px;color:#fff;font-weight:400;transform:scaleX(1.0701);-webkit-text-stroke:0.15px currentColor;">Opportunities</span>
<span class="t" style="left:306px;top:11.55px;font-size:11.5px;line-height:16.1px;color:#fff;font-weight:400;transform:scaleX(0.9380);-webkit-text-stroke:0.15px currentColor;">Leads</span>
<span class="t" style="left:359.8px;top:11.55px;font-size:11.5px;line-height:16.1px;color:#fff;font-weight:400;transform:scaleX(1.0357);-webkit-text-stroke:0.15px currentColor;">Quotes</span>
<span class="t" style="left:421.8px;top:11.55px;font-size:11.5px;line-height:16.1px;color:#fff;font-weight:400;transform:scaleX(0.9985);-webkit-text-stroke:0.15px currentColor;">Calendar</span>
<span class="t" style="left:492.2px;top:11.55px;font-size:11.5px;line-height:16.1px;color:#fff;font-weight:400;transform:scaleX(1.0349);-webkit-text-stroke:0.15px currentColor;">Documents</span>
<span class="t" style="left:576.5px;top:11.55px;font-size:11.5px;line-height:16.1px;color:#fff;font-weight:400;transform:scaleX(1.0571);-webkit-text-stroke:0.15px currentColor;">More</span>
<span class="t" style="left:927px;top:13.45px;font-size:11.5px;line-height:16.1px;color:#fff;font-weight:400;transform:scaleX(1.0465);-webkit-text-stroke:0.15px currentColor;">Administrator</span>
<span class="t" style="left:295.5px;top:51.95px;font-size:11.5px;line-height:16.1px;color:#721c24;font-weight:400;transform:scaleX(1.0300);-webkit-text-stroke:0.15px currentColor;">Unexpected error when calling action</span>
<span class="t" style="left:45.5px;top:299.84px;font-size:9.8px;line-height:13.72px;color:#1b1b1e;font-weight:400;transform:scaleX(0.9402);-webkit-text-stroke:0.3px currentColor;">Inspector</span>
<span class="t" style="left:111.5px;top:299.84px;font-size:9.8px;line-height:13.72px;color:#1b1b1e;font-weight:400;transform:scaleX(0.9095);-webkit-text-stroke:0.3px currentColor;">Console</span>
<span class="t" style="left:172.5px;top:299.84px;font-size:9.8px;line-height:13.72px;color:#1b1b1e;font-weight:400;transform:scaleX(0.9389);-webkit-text-stroke:0.3px currentColor;">Debugger</span>
<span class="t" style="left:241.2px;top:299.84px;font-size:9.8px;line-height:13.72px;color:#0060df;font-weight:400;transform:scaleX(0.9850);-webkit-text-stroke:0.3px currentColor;">Network</span>
<span class="t" style="left:289px;top:299.0px;font-size:11px;line-height:15.4px;color:#1c1c1f;font-weight:700;transform:scaleX(0.9806);-webkit-text-stroke:0.3px currentColor;">{ }</span>
<span class="t" style="left:304.5px;top:299.84px;font-size:9.8px;line-height:13.72px;color:#1b1b1e;font-weight:400;transform:scaleX(0.9399);-webkit-text-stroke:0.3px currentColor;">Style Editor</span>
<span class="t" style="left:379.5px;top:299.84px;font-size:9.8px;line-height:13.72px;color:#1b1b1e;font-weight:400;transform:scaleX(0.9395);-webkit-text-stroke:0.3px currentColor;">Performance</span>
<span class="t" style="left:460.5px;top:299.84px;font-size:9.8px;line-height:13.72px;color:#1b1b1e;font-weight:400;transform:scaleX(0.9635);-webkit-text-stroke:0.3px currentColor;">Memory</span>
<span class="t" style="left:522.5px;top:299.84px;font-size:9.8px;line-height:13.72px;color:#1b1b1e;font-weight:400;transform:scaleX(0.9234);-webkit-text-stroke:0.3px currentColor;">Storage</span>
<span class="t" style="left:582.5px;top:299.84px;font-size:9.8px;line-height:13.72px;color:#1b1b1e;font-weight:400;transform:scaleX(0.9314);-webkit-text-stroke:0.3px currentColor;">Accessibility</span>
<span class="t" style="left:660.5px;top:299.84px;font-size:9.8px;line-height:13.72px;color:#1b1b1e;font-weight:400;transform:scaleX(0.9617);-webkit-text-stroke:0.3px currentColor;">Application</span>
<span class="t" style="left:734.5px;top:299.84px;font-size:9.8px;line-height:13.72px;color:#1b1b1e;font-weight:400;transform:scaleX(0.9362);-webkit-text-stroke:0.3px currentColor;">DOM</span>
<span class="t" style="left:951.8px;top:301.3px;font-size:9px;line-height:12.6px;color:#1b1b1e;font-weight:400;transform:scaleX(0.7178);-webkit-text-stroke:0.3px currentColor;">1</span>
<span class="t" style="left:41px;top:322.19px;font-size:9.3px;line-height:13.02px;color:#a2a2aa;font-weight:400;transform:scaleX(0.8688);-webkit-text-stroke:0.3px currentColor;">Filter URLs</span>
<span class="t" style="left:568.8px;top:322.04px;font-size:9.8px;line-height:13.72px;color:#18181a;font-weight:400;transform:scaleX(0.9917);-webkit-text-stroke:0.3px currentColor;">All</span>
<span class="t" style="left:589.2px;top:321.18px;font-size:9.6px;line-height:13.44px;color:#38383d;font-weight:400;transform:scaleX(0.8306);-webkit-text-stroke:0.3px currentColor;">HTML</span>
<span class="t" style="left:621.2px;top:321.18px;font-size:9.6px;line-height:13.44px;color:#38383d;font-weight:400;transform:scaleX(0.7196);-webkit-text-stroke:0.3px currentColor;">CSS</span>
<span class="t" style="left:645.5px;top:321.18px;font-size:9.6px;line-height:13.44px;color:#38383d;font-weight:400;transform:scaleX(0.7766);-webkit-text-stroke:0.3px currentColor;">JS</span>
<span class="t" style="left:664.2px;top:321.18px;font-size:9.6px;line-height:13.44px;color:#38383d;font-weight:400;transform:scaleX(0.7994);-webkit-text-stroke:0.3px currentColor;">XHR</span>
<span class="t" style="left:691px;top:321.18px;font-size:9.6px;line-height:13.44px;color:#38383d;font-weight:400;transform:scaleX(0.8708);-webkit-text-stroke:0.3px currentColor;">Fonts</span>
<span class="t" style="left:722px;top:321.18px;font-size:9.6px;line-height:13.44px;color:#38383d;font-weight:400;transform:scaleX(0.8453);-webkit-text-stroke:0.3px currentColor;">Images</span>
<span class="t" style="left:759px;top:321.18px;font-size:9.6px;line-height:13.44px;color:#38383d;font-weight:400;transform:scaleX(0.8760);-webkit-text-stroke:0.3px currentColor;">Media</span>
<span class="t" style="left:792px;top:321.18px;font-size:9.6px;line-height:13.44px;color:#38383d;font-weight:400;transform:scaleX(0.8016);-webkit-text-stroke:0.3px currentColor;">WS</span>
<span class="t" style="left:814.5px;top:321.18px;font-size:9.6px;line-height:13.44px;color:#38383d;font-weight:400;transform:scaleX(0.9208);-webkit-text-stroke:0.3px currentColor;">Other</span>
<span class="t" style="left:866.8px;top:322.04px;font-size:9.8px;line-height:13.72px;color:#38383d;font-weight:400;transform:scaleX(0.8020);-webkit-text-stroke:0.3px currentColor;">Disable Cache</span>
<span class="t" style="left:934.8px;top:320.64px;font-size:9.8px;line-height:13.72px;color:#38383d;font-weight:400;transform:scaleX(0.8905);-webkit-text-stroke:0.3px currentColor;">No Throttling</span>
<span class="t" style="left:14.5px;top:343.04px;font-size:9.8px;line-height:13.72px;color:#1b1b1e;font-weight:400;transform:scaleX(0.8698);-webkit-text-stroke:0.3px currentColor;">Do</span>
<span class="t" style="left:32.5px;top:343.04px;font-size:9.8px;line-height:13.72px;color:#1b1b1e;font-weight:400;transform:scaleX(0.8166);-webkit-text-stroke:0.3px currentColor;">File</span>
<span class="t" style="left:134.5px;top:343.04px;font-size:9.8px;line-height:13.72px;color:#1b1b1e;font-weight:400;transform:scaleX(0.9303);-webkit-text-stroke:0.3px currentColor;">Initiator</span>
<span class="t" style="left:190.5px;top:343.04px;font-size:9.8px;line-height:13.72px;color:#1b1b1e;font-weight:400;transform:scaleX(0.8036);-webkit-text-stroke:0.3px currentColor;">Tra…</span>
<span class="t" style="left:8.5px;top:360.6px;font-size:9px;line-height:12.6px;color:#fff;font-weight:400;transform:scaleX(0.7553);-webkit-text-stroke:0.3px currentColor;">I</span>
<span class="t" style="left:32.5px;top:360.04px;font-size:9.8px;line-height:13.72px;color:#fff;font-weight:400;transform:scaleX(0.8841);-webkit-text-stroke:0.3px currentColor;">graphql</span>
<span class="t" style="left:134.5px;top:360.04px;font-size:9.8px;line-height:13.72px;color:#fff;font-weight:400;transform:scaleX(0.8830);-webkit-text-stroke:0.3px currentColor;">polyfills-…</span>
<span class="t" style="left:190.5px;top:360.04px;font-size:9.8px;line-height:13.72px;color:#fff;font-weight:400;transform:scaleX(0.8283);-webkit-text-stroke:0.3px currentColor;">1.2…</span>
<span class="t" style="left:249.2px;top:342.31px;font-size:9.7px;line-height:13.58px;color:#1b1b1e;font-weight:400;transform:scaleX(0.9201);-webkit-text-stroke:0.3px currentColor;">Headers</span>
<span class="t" style="left:299.2px;top:342.31px;font-size:9.7px;line-height:13.58px;color:#1b1b1e;font-weight:400;transform:scaleX(0.9143);-webkit-text-stroke:0.3px currentColor;">Cookies</span>
<span class="t" style="left:347.5px;top:342.31px;font-size:9.7px;line-height:13.58px;color:#1b1b1e;font-weight:400;transform:scaleX(0.9254);-webkit-text-stroke:0.3px currentColor;">Request</span>
<span class="t" style="left:397.5px;top:342.31px;font-size:9.7px;line-height:13.58px;color:#0060df;font-weight:400;transform:scaleX(0.8963);-webkit-text-stroke:0.3px currentColor;">Response</span>
<span class="t" style="left:453px;top:342.31px;font-size:9.7px;line-height:13.58px;color:#1b1b1e;font-weight:400;transform:scaleX(0.9415);-webkit-text-stroke:0.3px currentColor;">Timings</span>
<span class="t" style="left:500.5px;top:342.31px;font-size:9.7px;line-height:13.58px;color:#1b1b1e;font-weight:400;transform:scaleX(0.9012);-webkit-text-stroke:0.3px currentColor;">Stack Trace</span>
<span class="t" style="left:237.5px;top:360.69px;font-size:9.3px;line-height:13.02px;color:#a2a2aa;font-weight:400;transform:scaleX(0.9351);-webkit-text-stroke:0.3px currentColor;">Filter properties</span>
<span class="t" style="left:223.8px;top:378.58px;font-size:9.6px;line-height:13.44px;color:#1b1b1e;font-weight:400;transform:scaleX(0.7971);-webkit-text-stroke:0.3px currentColor;">JSON</span>
<span class="t" style="left:981.8px;top:378.78px;font-size:9.6px;line-height:13.44px;color:#1b1b1e;font-weight:400;transform:scaleX(0.8020);-webkit-text-stroke:0.3px currentColor;">Raw</span>
<span class="t" style="left:235px;top:395.72px;font-size:9.4px;line-height:13.16px;color:#0060df;font-weight:400;transform:scaleX(0.9038);-webkit-text-stroke:0.15px currentColor;"><span style="color:#0074e8">errors:</span> [ {…} ]</span>
<span class="t" style="left:247.5px;top:410.72px;font-size:9.4px;line-height:13.16px;color:#fff;font-weight:400;transform:scaleX(0.8817);-webkit-text-stroke:0.15px currentColor;">0: Object { message: "Internal server error", extensions: {…}, locations: […], … }</span>
<span class="t" style="left:259.2px;top:425.62px;font-size:9.4px;line-height:13.16px;color:#dd00a9;font-weight:400;transform:scaleX(0.9013);-webkit-text-stroke:0.15px currentColor;"><span style="color:#0074e8">message:</span> "Internal server error"</span>
<span class="t" style="left:259.2px;top:440.72px;font-size:9.4px;line-height:13.16px;color:#0060df;font-weight:400;transform:scaleX(0.9051);-webkit-text-stroke:0.15px currentColor;"><span style="color:#0074e8">extensions:</span> Object { <span style="color:#0074e8">category:</span> <span style="color:#dd00a9">"internal"</span> }</span>
<span class="t" style="left:259.2px;top:455.72px;font-size:9.4px;line-height:13.16px;color:#0060df;font-weight:400;transform:scaleX(0.9036);-webkit-text-stroke:0.15px currentColor;"><span style="color:#0074e8">locations:</span> [ {…} ]</span>
<span class="t" style="left:259.2px;top:470.22px;font-size:9.4px;line-height:13.16px;color:#0060df;font-weight:400;transform:scaleX(0.8996);-webkit-text-stroke:0.15px currentColor;"><span style="color:#0074e8">path:</span> [ <span style="color:#dd00a9">"createProcess"</span> ]</span>
<span class="t" style="left:235px;top:485.22px;font-size:9.4px;line-height:13.16px;color:#0060df;font-weight:400;transform:scaleX(0.8893);-webkit-text-stroke:0.15px currentColor;"><span style="color:#0074e8">data:</span> Object { <span style="color:#0074e8">createProcess:</span> <span style="color:#737373">null</span> }</span>
</div></body></html>
